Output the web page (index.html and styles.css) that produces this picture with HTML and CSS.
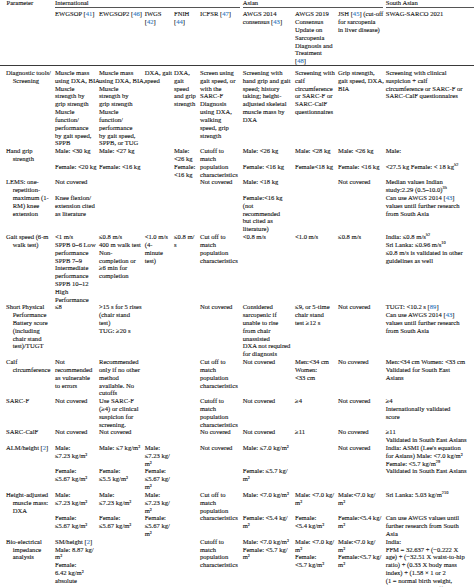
FILE: index.html
```
<!DOCTYPE html>
<html lang="en">
<head>
<meta charset="utf-8">
<title>Sarcopenia guidelines comparison</title>
<link rel="stylesheet" href="styles.css">
</head>
<body>
<table class="tbl">
<colgroup>
<col class="w-param"><col class="w-ewg"><col class="w-ewg2"><col class="w-iwgs"><col class="w-fnih"><col class="w-icfsr"><col class="w-awgs14"><col class="w-awgs19"><col class="w-jsh"><col class="w-swag">
</colgroup>
<thead>
<tr class="h1">
<th class="hp" rowspan="2">Parameter</th>
<th class="grp" colspan="5"><div class="rule">International</div></th>
<th class="grp" colspan="3"><div class="rule">Asian</div></th>
<th class="grp"><div class="rule end">South Asian</div></th>
</tr>
<tr class="h2">
<th>EWGSOP [<span class="ref">41</span>]</th>
<th>EWGSOP2 [<span class="ref">46</span>]</th>
<th>IWGS<br>[<span class="ref">42</span>]</th>
<th>FNIH<br>[<span class="ref">44</span>]</th>
<th>ICFSR [<span class="ref">47</span>]</th>
<th>AWGS 2014<br>consensus [<span class="ref">43</span>]</th>
<th>AWGS 2019<br>Consensus<br>Update on<br>Sarcopenia<br>Diagnosis and<br>Treatment<br>[<span class="ref">48</span>]</th>
<th>JSH [<span class="ref">45</span>] (cut-off<br>for sarcopenia<br>in liver disease)</th>
<th>SWAG-SARCO 2021</th>
</tr>
</thead>
<tbody>
<tr class="first">
<td class="p">Diagnostic tools/<br>Screening</td>
<td>Muscle mass<br>using DXA, BIA<br>Muscle<br>strength by<br>grip strength<br>Muscle<br>function/<br>performance<br>by gait speed,<br>SPPB</td>
<td>Muscle mass<br>using DXA, BIA,<br>Muscle<br>strength by<br>grip strength<br>Muscle<br>function/<br>performance<br>by gait speed,<br>SPPB, or TUG</td>
<td>DXA, gait<br>speed</td>
<td>DXA,<br>gait<br>speed<br>and grip<br>strength</td>
<td>Screen using<br>gait speed, or<br>with the<br>SARC-F<br>Diagnosis<br>using DXA,<br>walking<br>speed, grip<br>strength</td>
<td>Screening with<br>hand grip and gait<br>speed; history<br>taking; height-<br>adjusted skeletal<br>muscle mass by<br>DXA</td>
<td>Screening with<br>calf<br>circumference<br>or SARC-F or<br>SARC-CalF<br>questionnaires</td>
<td>Grip strength,<br>gait speed, DXA,<br>BIA</td>
<td>Screening with clinical<br>suspicion + calf<br>circumference or SARC-F or<br>SARC-CalF questionnaires</td>
</tr>
<tr>
<td class="p" rowspan="2">Hand grip<br>strength</td>
<td>Male: &lt;30 kg</td>
<td>Male: &lt;27 kg</td>
<td rowspan="2"></td>
<td>Male:<br>&lt;26 kg</td>
<td rowspan="2">Cutoff to<br>match<br>population<br>characteristics</td>
<td>Male: &lt;26 kg</td>
<td>Male: &lt;28 kg</td>
<td>Male: &lt;26 kg</td>
<td>Male:</td>
</tr>
<tr>
<td>Female: &lt;20 kg</td>
<td>Female: &lt;16 kg</td>
<td>Female:<br>&lt;16 kg</td>
<td>Female: &lt;16 kg</td>
<td>Female&lt;18 kg</td>
<td>Female: &lt;16 kg</td>
<td>&lt;27.5 kg Female: &lt; 18 kg<sup>52</sup></td>
</tr>
<tr>
<td class="p" rowspan="2">LEMS: one-<br>repetition-<br>maximum (1-<br>RM) knee<br>extension</td>
<td>Not covered</td>
<td rowspan="2"></td>
<td rowspan="2"></td>
<td rowspan="2"></td>
<td rowspan="2">Not covered</td>
<td>Male: &lt;18 kg</td>
<td rowspan="2"></td>
<td rowspan="2">Not covered</td>
<td>Median values Indian<br>study:2.29 (0.5–10.0)<sup>35</sup></td>
</tr>
<tr>
<td>Knee flexion/<br>extension cited<br>as literature</td>
<td>Female:&lt;16 kg<br>(not<br>recommended<br>but cited as<br>literature)</td>
<td>Can use AWGS 2014 [<span class="ref">43</span>]<br>values until further research<br>from South Asia</td>
</tr>
<tr>
<td class="p">Gait speed (6-m<br>walk test)</td>
<td>&lt;1 m/s<br>SPPB 0–6 Low<br>performance<br>SPPB 7–9<br>Intermediate<br>performance<br>SPPB 10–12<br>High<br>Performance</td>
<td>≤0.8 m/s<br>400 m walk test<br>Non-<br>completion or<br>≥6 min for<br>completion</td>
<td>&lt;1.0 m/s<br>(4-<br>minute<br>test)</td>
<td>≤0.8 m/<br>s</td>
<td>Cut off to<br>match<br>population<br>characteristics</td>
<td>&lt;0.8 m/s</td>
<td>&lt;1.0 m/s</td>
<td>≤0.8 m/s</td>
<td>India: ≤0.8 m/s<sup>52</sup><br>Sri Lanka: ≤0.96 m/s<sup>10</sup><br>≤0.8 m/s is validated in other<br>guidelines as well</td>
</tr>
<tr>
<td class="p">Short Physical<br>Performance<br>Battery score<br>(including<br>chair stand<br>test)/TUGT</td>
<td>≤8</td>
<td>&gt;15 s for 5 rises<br>(chair stand<br>test)<br>TUG: ≥20 s</td>
<td></td>
<td></td>
<td>Not covered</td>
<td>Considered<br>sarcopenic if<br>unable to rise<br>from chair<br>unassisted<br>DXA not required<br>for diagnosis</td>
<td>≤9, or 5-time<br>chair stand<br>test ≥12 s</td>
<td>Not covered</td>
<td>TUGT: &lt;10.2 s [<span class="ref">89</span>]<br>Can use AWGS 2014 [<span class="ref">43</span>]<br>values until further research<br>from South Asia</td>
</tr>
<tr>
<td class="p">Calf<br>circumference</td>
<td>Not<br>recommended<br>as vulnerable<br>to errors</td>
<td>Recommended<br>only if no other<br>method<br>available. No<br>cutoffs</td>
<td></td>
<td></td>
<td>Cut off to<br>match<br>population<br>characteristics</td>
<td>Not covered</td>
<td>Men:&lt;34 cm<br>Women:<br>&lt;33 cm</td>
<td>No covered</td>
<td>Men:&lt;34 cm Women: &lt;33 cm<br>Validated for South East<br>Asians</td>
</tr>
<tr>
<td class="p">SARC-F</td>
<td>Not covered</td>
<td>Use SARC-F<br>(≥4) or clinical<br>suspicion for<br>screening.</td>
<td></td>
<td></td>
<td>Cutoff to<br>match<br>population<br>characteristics</td>
<td>Not covered</td>
<td>≥4</td>
<td>Not covered</td>
<td>≥4<br>Internationally validated<br>score</td>
</tr>
<tr>
<td class="p">SARC-CalF</td>
<td>Not covered</td>
<td>Not covered</td>
<td></td>
<td></td>
<td>No covered</td>
<td>Not covered</td>
<td>≥11</td>
<td>No covered</td>
<td>≥11<br>Validated in South East Asians</td>
</tr>
<tr>
<td class="p" rowspan="2">ALM/height [<span class="ref">2</span>]</td>
<td>Male:<br>≤7.23 kg/m²</td>
<td>Male: ≤7 kg/m²</td>
<td>Male:<br>≤7.23 kg/<br>m²</td>
<td rowspan="2"></td>
<td rowspan="2">Not covered</td>
<td>Male: ≤7.0 kg/m²</td>
<td rowspan="2"></td>
<td rowspan="2">Not covered</td>
<td rowspan="2">India: ASMI (Lee's equation<br>for Asians) Male: &lt;7.0 kg/m²<br>Female: &lt;5.7 kg/m<sup>29</sup><br>Validated in South East Asians</td>
</tr>
<tr>
<td>Female:<br>≤5.67 kg/m²</td>
<td>Female:<br>≤5.5 kg/m²</td>
<td>Female:<br>≤5.67 kg/<br>m²</td>
<td>Female: ≤5.7 kg/<br>m²</td>
</tr>
<tr>
<td class="p" rowspan="2">Height-adjusted<br>muscle mass:<br>DXA</td>
<td>Male:<br>≤7.23 kg/m²</td>
<td>Male:<br>≤7.23 kg/m²</td>
<td>Male:<br>≤7.23 kg/<br>m²</td>
<td rowspan="2"></td>
<td rowspan="2">Cut off to<br>match<br>population<br>characteristics</td>
<td>Male: &lt;7.0 kg/m²</td>
<td>Male: &lt;7.0 kg/<br>m²</td>
<td>Male:&lt;7.0 kg/<br>m²</td>
<td>Sri Lanka: 5.03 kg/m<sup>210</sup></td>
</tr>
<tr>
<td>Female:<br>≤5.67 kg/m²</td>
<td>Female:<br>≤5.67 kg/m²</td>
<td>Female:<br>≤5.67 kg/<br>m²</td>
<td>Female: &lt;5.4 kg/<br>m²</td>
<td>Female:<br>&lt;5.4 kg/m²</td>
<td>Female:&lt;5.4 kg/<br>m²</td>
<td>Can use AWGS values until<br>further research from South<br>Asia</td>
</tr>
<tr>
<td class="p">Bio-electrical<br>impedance<br>analysis</td>
<td>SM/height [<span class="ref">2</span>]<br>Male: 8.87 kg/<br>m²<br>Female:<br>6.42 kg/m²<br>absolute<br>skeletal muscle</td>
<td></td>
<td></td>
<td></td>
<td>Cutoff to<br>match<br>population<br>characteristics</td>
<td>Male: &lt;7.0 kg/m²<br>Female: &lt;5.7 kg/<br>m²</td>
<td>Male: &lt;7.0 kg/<br>m²<br>Female:<br>&lt;5.7 kg/m²</td>
<td>Male:&lt;7.0 kg/<br>m²<br>Female:&lt;5.7 kg/<br>m²</td>
<td>India:<br>FFM = 32.637 + (−0.222 X<br>age) + (−32.51 X waist-to-hip<br>ratio) + (0.33 X body mass<br>index) + (1.58 × 1 or 2<br>(1 = normal birth weight,<br>2 = low birth weight)) +</td>
</tr>
</tbody>
</table>
</body>
</html>
```
FILE: styles.css
```
* { box-sizing: border-box; }
html, body {
  margin: 0;
  padding: 0;
  background: #ffffff;
}
body {
  width: 474px;
  height: 587px;
  overflow: hidden;
  font-family: "Liberation Serif", "Times New Roman", serif;
  font-size: 6.6px;
  line-height: 7.82px;
  color: #111111;
  -webkit-text-stroke: 0.1px #111111;
}
.tbl {
  width: 474px;
  margin-top: -1px;
  border-collapse: collapse;
  border-spacing: 0;
  table-layout: fixed;
}
.w-param { width: 55px; }
.w-ewg { width: 44px; }
.w-ewg2 { width: 45.7px; }
.w-iwgs { width: 29.3px; }
.w-fnih { width: 26px; }
.w-icfsr { width: 42.7px; }
.w-awgs14 { width: 52.3px; }
.w-awgs19 { width: 43px; }
.w-jsh { width: 47.7px; }
.w-swag { width: 88.3px; }

.tbl th, .tbl td {
  padding: 0;
  text-align: left;
  vertical-align: top;
  white-space: nowrap;
  font-weight: normal;
}
.tbl th.hp {
  padding-left: 6.5px;
  border-bottom: 1px solid #3a3a3a;
}
.grp .rule {
  border-bottom: 1px solid #555555;
  padding-bottom: 0.5px;
  margin-right: 3px;
}
.grp .rule.end { margin-right: 0; }
.h2 th {
  padding-top: 2px;
  padding-bottom: 0;
  border-bottom: 1px solid #3a3a3a;
}
.tbl td.p {
  padding-left: 12.7px;
  text-indent: -6.7px;
}
.first td { padding-top: 3px; }
.ref {
  color: #2f78c0;
  -webkit-text-stroke: 0.1px #2f78c0;
}
sup {
  font-size: 4.4px;
  line-height: 0;
  vertical-align: 2.6px;
}
```
